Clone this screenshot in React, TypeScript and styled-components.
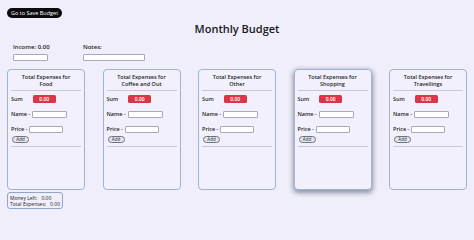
import styled, { createGlobalStyle } from 'styled-components';

const GlobalStyle = createGlobalStyle`
	html, body {
		margin: 0;
		padding: 0;
		background: #efeefa;
	}

	body {
		font-family: "Open Sans", "Noto Sans", sans-serif;
		color: #1d1d24;
	}
`;

const categories = ['Food', 'Coffee and Out', 'Other', 'Shopping', 'Travellings'];

const Page = styled.div`
	width: 474px;
	height: 215px;
	box-sizing: border-box;
	padding: 8px 7px 0;
	display: flex;
	flex-direction: column;
`;

const SaveButton = styled.button`
	align-self: flex-start;
	height: 10px;
	padding: 0 4px;
	border: none;
	border-radius: 6px;
	background: #0b0b10;
	color: #ffffff;
	font-family: inherit;
	font-size: 5.5px;
	line-height: 10px;
`;

const Title = styled.h1`
	margin: 3px 0 0;
	text-align: center;
	font-size: 11px;
	font-weight: 600;
	line-height: 16px;
	color: #18181f;
`;

const TopFields = styled.div`
	display: flex;
	padding-left: 6px;
	margin-top: 6px;
`;

const Field = styled.div<{ $w: number }>`
	width: ${(p) => p.$w}px;
	display: flex;
	flex-direction: column;
	gap: 3px;
`;

const FieldLabel = styled.span`
	font-size: 6px;
	font-weight: 600;
	line-height: 8px;
`;

const TextBox = styled.input<{ $w: number }>`
	width: ${(p) => p.$w}px;
	height: 7px;
	box-sizing: border-box;
	padding: 0;
	margin: 0;
	border: 1px solid #a9a9b4;
	border-radius: 1px;
	background: #ffffff;
`;

const CardRow = styled.div`
	display: flex;
	justify-content: space-between;
	margin-top: 8px;
`;

const Card = styled.div<{ $raised?: boolean }>`
	width: 78px;
	height: 121px;
	box-sizing: border-box;
	padding: 4px 3px 0;
	border: 1px solid #9fb3d1;
	border-radius: 4px;
	background: #f1f0fc;
	box-shadow: ${(p) => (p.$raised ? '0 2px 5px 1px rgba(60, 70, 100, 0.55)' : 'none')};
	display: flex;
	flex-direction: column;
`;

const CardTitle = styled.div`
	text-align: center;
	font-size: 5.5px;
	font-weight: 600;
	line-height: 7px;
	min-height: 14px;
	padding: 0 6px;
`;

const Rule = styled.div<{ $top: number }>`
	height: 1px;
	background: #c7c9d4;
	margin-top: ${(p) => p.$top}px;
`;

const Line = styled.div<{ $top: number }>`
	display: flex;
	align-items: center;
	gap: 2px;
	margin-top: ${(p) => p.$top}px;
	font-size: 5.5px;
	font-weight: 600;
	line-height: 8px;
`;

const SumBadge = styled.span`
	width: 23px;
	height: 8px;
	margin-left: 8px;
	border-radius: 1.5px;
	background: #dd3545;
	color: #ffffff;
	font-size: 5px;
	line-height: 8px;
	text-align: center;
`;

const AddButton = styled.button`
	align-self: flex-start;
	margin: 3px 0 0 1px;
	width: 17px;
	height: 7px;
	padding: 0;
	border: 1px solid #6e7380;
	border-radius: 4px;
	background: #e4e6ee;
	font-family: inherit;
	font-size: 4.5px;
	line-height: 5px;
	color: #2a2a33;
`;

const Summary = styled.div`
	align-self: flex-start;
	margin-top: 2px;
	height: 17px;
	box-sizing: border-box;
	padding: 1.5px 2px;
	border: 1px solid #8fa6c8;
	border-radius: 3px;
	font-size: 5px;
	font-weight: 500;
	line-height: 6.5px;
`;

const SummaryLine = styled.div`
	display: flex;
	gap: 4px;
	white-space: nowrap;
`;

const ExpenseCard = ({ name, raised }: { name: string; raised?: boolean }) => (
	<Card $raised={raised}>
		<CardTitle>
			Total Expenses for
			<br />
			{name}
		</CardTitle>
		<Rule $top={2} />
		<Line $top={4}>
			Sum
			<SumBadge>0.00</SumBadge>
		</Line>
		<Line $top={7}>
			Name -
			<TextBox $w={35} />
		</Line>
		<Line $top={7}>
			Price -
			<TextBox $w={34} />
		</Line>
		<AddButton>Add</AddButton>
		<Rule $top={3} />
	</Card>
);

const App = () => (
	<>
		<GlobalStyle />
		<Page>
			<SaveButton>Go to Save Budget</SaveButton>
			<Title>Monthly Budget</Title>
			<TopFields>
				<Field $w={70}>
					<FieldLabel>Income: 0.00</FieldLabel>
					<TextBox $w={35} />
				</Field>
				<Field $w={70}>
					<FieldLabel>Notes:</FieldLabel>
					<TextBox $w={62} />
				</Field>
			</TopFields>
			<CardRow>
				{categories.map((c) => (
					<ExpenseCard key={c} name={c} raised={c === 'Shopping'} />
				))}
			</CardRow>
			<Summary>
				<SummaryLine>
					<span>Money Left:</span>
					<span>0.00</span>
				</SummaryLine>
				<SummaryLine>
					<span>Total Expenses:</span>
					<span>0.00</span>
				</SummaryLine>
			</Summary>
		</Page>
	</>
);

export default App;
